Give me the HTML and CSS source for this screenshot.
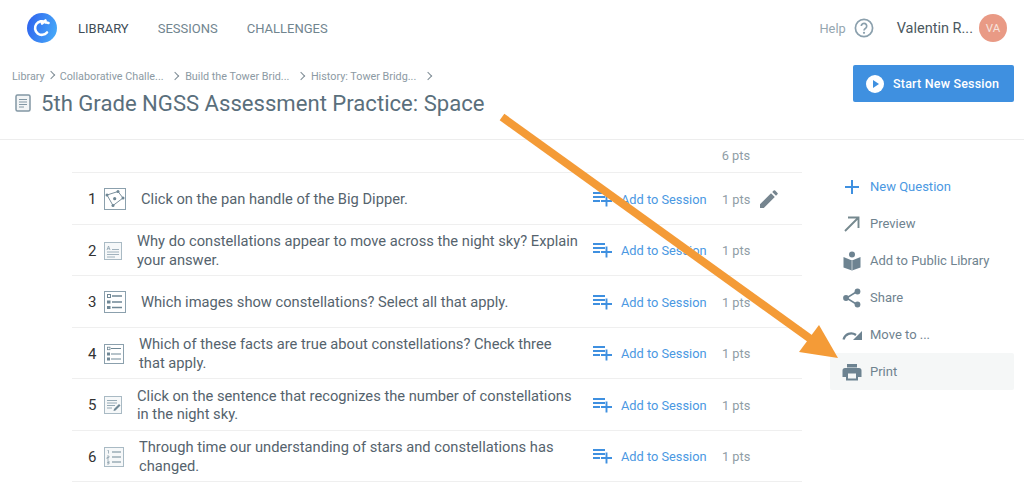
FILE: index.html
```html
<!DOCTYPE html>
<html lang="en">
<head>
<meta charset="utf-8">
<title>5th Grade NGSS Assessment Practice: Space</title>
<link rel="stylesheet" href="styles.css">
</head>
<body>
<svg width="0" height="0" class="defs">
  <defs>
    <symbol id="add" viewBox="0 0 20 15">
      <path d="M1 1h12M1 5h12M1 9h7M14.500 3.500v11M9 9h11" fill="none" stroke="#3f90e0" stroke-width="1.900"/>
    </symbol>
  </defs>
</svg>
<header class="topbar">
  <svg class="logo" viewBox="0 0 30 30">
    <defs><linearGradient id="lg" x1="0" x2="1" y1="0.2" y2="0.5"><stop offset="0" stop-color="#2f63ee"/><stop offset="1" stop-color="#45a6f8"/></linearGradient></defs>
    <circle cx="15" cy="15" r="15" fill="url(#lg)"/>
    <path d="M20 19.500a6.800 6.800 0 1 1-1.500-10.200M15 10.500l3.500-3M18.500 9.300l3 .7" fill="none" stroke="#fff" stroke-width="2.600" stroke-linecap="round"/>
  </svg>
  <nav class="nav">
    <a class="nav-link active">LIBRARY</a>
    <a class="nav-link">SESSIONS</a>
    <a class="nav-link">CHALLENGES</a>
  </nav>
  <div class="account">
    <span class="help">Help</span>
    <svg class="help-icon" viewBox="0 0 20 20"><circle cx="10" cy="10" r="8.600" fill="none" stroke="#8ba0ad" stroke-width="1.700"/><path d="M7.300 8a2.700 2.700 0 1 1 4.300 2.200c-1 .7-1.600 1.200-1.600 2.300" fill="none" stroke="#8ba0ad" stroke-width="1.700"/><circle cx="10" cy="14.800" r="1.100" fill="#8ba0ad"/></svg>
    <span class="user">Valentin R...</span>
    <span class="avatar">VA</span>
  </div>
</header>
<section class="heading">
  <div class="heading-text">
    <div class="crumbs">
      <span class="crumb first">Library</span>
      <span class="crumb">Collaborative Challe...</span>
      <span class="crumb">Build the Tower Brid...</span>
      <span class="crumb">History: Tower Bridg...</span>
    </div>
    <h1 class="title">
      <svg class="doc" viewBox="0 0 16 18"><rect x="1" y="1" width="14" height="16" rx="1.500" fill="#f3f5f6" stroke="#8297a4" stroke-width="1.500"/><path d="M4 5.500h8M4 8h8M4 10.500h8M4 13h5" stroke="#8297a4" stroke-width="1"/></svg>
      5th Grade NGSS Assessment Practice: Space
    </h1>
  </div>
  <button class="start">
    <svg class="play" viewBox="0 0 18 18"><circle cx="9" cy="9" r="9" fill="#fff"/><path d="M7 5l6 4-6 4z" fill="#3f90e0"/></svg>
    Start New Session
  </button>
</section>
<main class="content">
  <div class="questions">
    <div class="total"><span>6 pts</span></div>
    <div class="q">
      <span class="num">1</span>
      <svg class="qi w22" viewBox="0 0 22 22"><rect x=".5" y=".5" width="21" height="21" fill="#fff" stroke="#8ba0ad"/><path d="M3 7l11-3.500 5 6.500-10 7.500z" fill="none" stroke="#7b909d" stroke-width="1"/><circle cx="3" cy="7" r="1.500" fill="#6f8795"/><circle cx="14" cy="3.500" r="1.500" fill="#6f8795"/><circle cx="19" cy="10" r="1.500" fill="#6f8795"/><circle cx="9" cy="17.500" r="1.500" fill="#6f8795"/><circle cx="10.700" cy="10.700" r="1.600" fill="#6f8795"/></svg>
      <span class="qtext">Click on the pan handle of the Big Dipper.</span>
      <a class="add"><svg class="add-icon"><use href="#add"/></svg>Add to Session</a>
      <span class="pts">1 pts</span>
      <svg class="edit" viewBox="0 0 18 18"><path d="M0 18v-3.800L11 3.200 14.800 7 3.800 18zM12.200 2l1.500-1.500a1 1 0 0 1 1.400 0l2.400 2.400a1 1 0 0 1 0 1.400L16 5.800z" fill="#76858f"/></svg>
    </div>
    <div class="q">
      <span class="num">2</span>
      <svg class="qi w18" viewBox="0 0 18 18"><rect x=".5" y=".5" width="17" height="17" fill="#f6f8f9" stroke="#a9bac4"/><path d="M3 8l1.500-4L6 8M3.600 6.700h1.800M8 7.500h7M3 10h12M3 12.500h12M3 15h8" fill="none" stroke="#8ba0ad" stroke-width=".8"/></svg>
      <span class="qtext">Why do constellations appear to move across the night sky? Explain your answer.</span>
      <a class="add"><svg class="add-icon"><use href="#add"/></svg>Add to Session</a>
      <span class="pts">1 pts</span>
    </div>
    <div class="q">
      <span class="num">3</span>
      <svg class="qi w22" viewBox="0 0 22 22"><rect x=".5" y=".5" width="21" height="21" fill="#fff" stroke="#8ba0ad"/><path d="M8 5h10M8 11h10M8 16.500h10" stroke="#6f8795" stroke-width="1.300"/><rect x="3.500" y="3.500" width="3" height="3" fill="none" stroke="#6f8795"/><rect x="3" y="9.500" width="3.500" height="3" fill="#6f8795"/><rect x="3" y="15" width="3.500" height="3" fill="#6f8795"/></svg>
      <span class="qtext">Which images show constellations? Select all that apply.</span>
      <a class="add"><svg class="add-icon"><use href="#add"/></svg>Add to Session</a>
      <span class="pts">1 pts</span>
    </div>
    <div class="q">
      <span class="num">4</span>
      <svg class="qi w20" viewBox="0 0 20 20"><rect x=".5" y=".5" width="19" height="19" fill="#fff" stroke="#8ba0ad"/><path d="M7 4.500h10M7 10h10M7 15h10" stroke="#6f8795" stroke-width="1.200"/><rect x="3.500" y="3.200" width="2.500" height="2.500" fill="none" stroke="#6f8795" stroke-width=".8"/><rect x="3" y="8.500" width="3" height="3" fill="#6f8795"/><rect x="3" y="13.500" width="3" height="3" fill="#6f8795"/></svg>
      <span class="qtext">Which of these facts are true about constellations? Check three that apply.</span>
      <a class="add"><svg class="add-icon"><use href="#add"/></svg>Add to Session</a>
      <span class="pts">1 pts</span>
    </div>
    <div class="q">
      <span class="num">5</span>
      <svg class="qi w18" viewBox="0 0 18 18"><rect x=".5" y=".5" width="17" height="17" fill="#f6f8f9" stroke="#a9bac4"/><path d="M3 4.500h10M3 7h10M3 9.500h8M3 12h5" stroke="#8ba0ad" stroke-width=".9"/><path d="M9.500 15l.5-2 5-5 1.500 1.500-5 5z" fill="#6f8795"/></svg>
      <span class="qtext">Click on the sentence that recognizes the number of constellations in the night sky.</span>
      <a class="add"><svg class="add-icon"><use href="#add"/></svg>Add to Session</a>
      <span class="pts">1 pts</span>
    </div>
    <div class="q">
      <span class="num">6</span>
      <svg class="qi w20" viewBox="0 0 20 20"><rect x=".5" y=".5" width="19" height="19" fill="#f6f8f9" stroke="#a9bac4"/><path d="M8 5h9M8 10h9M8 15h9" stroke="#6f8795" stroke-width="1.100"/><path d="M3.500 3.500h1v3M3 9h2v1.500H3V12h2M3 14h2v3H3M3 15.500h2" fill="none" stroke="#6f8795" stroke-width=".6"/></svg>
      <span class="qtext">Through time our understanding of stars and constellations has changed.</span>
      <a class="add"><svg class="add-icon"><use href="#add"/></svg>Add to Session</a>
      <span class="pts">1 pts</span>
    </div>
  </div>
  <aside class="side">
    <a class="action primary">
      <svg class="action-icon" viewBox="0 0 20 20"><path d="M10 3v14M3 10h14" stroke="#3f90e0" stroke-width="2"/></svg>New Question
    </a>
    <a class="action">
      <svg class="action-icon" viewBox="0 0 20 20"><path d="M3 17L16.500 3.500M6 3.500h10.500V14" fill="none" stroke="#76898f" stroke-width="1.900"/></svg>Preview
    </a>
    <a class="action">
      <svg class="action-icon" viewBox="0 0 20 20"><circle cx="10" cy="3.500" r="3" fill="#6d8391"/><path d="M1.500 6l8.500 3.500L18.500 6v10.500L10 19.500 1.500 16.500z" fill="#6d8391"/><path d="M10 10v9" stroke="#fff" stroke-width=".6"/></svg>Add to Public Library
    </a>
    <a class="action">
      <svg class="action-icon" viewBox="0 0 20 20"><path d="M15 3.500L4.500 10 15 16.500" fill="none" stroke="#6d8391" stroke-width="1.500"/><circle cx="15.500" cy="3.500" r="2.900" fill="#6d8391"/><circle cx="4" cy="10" r="2.900" fill="#6d8391"/><circle cx="15.500" cy="16.500" r="2.900" fill="#6d8391"/></svg>Share
    </a>
    <a class="action">
      <svg class="action-icon" viewBox="0 0 20 20"><path d="M1.500 14.500C3 9 9 6.500 14 10" fill="none" stroke="#6d8391" stroke-width="2.200"/><path d="M20 6v9h-9z" fill="#6d8391"/></svg>Move to ...
    </a>
    <a class="action hover">
      <svg class="action-icon" viewBox="0 0 20 20"><path d="M5 2h10v3.500H5zM3 6h14a2.500 2.500 0 0 1 2.500 2.500V15H16v3.500H4V15H.5V8.500A2.500 2.500 0 0 1 3 6z" fill="#6d8391"/><rect x="6" y="11.500" width="8" height="5" fill="#f5f7f7"/></svg>Print
    </a>
  </aside>
</main>
<svg class="arrow" viewBox="0 0 1024 492" width="1024" height="492">
  <path d="M502 117L812 340" stroke="#f49b37" stroke-width="8" fill="none"/>
  <path d="M838 358L819 325L799 352z" fill="#f49b37"/>
</svg>
</body>
</html>
```
FILE: styles.css
```css
* { box-sizing: border-box; }
html, body { margin: 0; padding: 0; }
body {
  position: relative;
  width: 1024px;
  height: 492px;
  overflow: hidden;
  background: #fff;
  font-family: Roboto, "Liberation Sans", sans-serif;
  color: #55646e;
}
.defs { position: absolute; }

.topbar {
  display: flex;
  align-items: center;
  height: 56px;
  padding: 0 17px 0 27px;
}
.logo { width: 30px; height: 30px; }
.nav { display: flex; gap: 29px; margin-left: 21px; }
.nav-link { font-size: 13px; color: #71858f; }
.nav-link.active { color: #3f4d57; }
.account { display: flex; align-items: center; margin-left: auto; }
.help { font-size: 12.800px; color: #95a6b0; }
.help-icon { width: 20px; height: 20px; margin-left: 8px; }
.user { font-size: 14.500px; color: #4b5860; margin-left: 23px; }
.avatar {
  display: flex; align-items: center; justify-content: center;
  width: 28px; height: 28px; margin-left: 6px;
  border-radius: 50%;
  background: #e99a85;
  color: #f7e3dc;
  font-size: 11.500px;
}

.heading {
  display: flex;
  justify-content: space-between;
  height: 84px;
  padding: 9px 10px 0 12px;
  border-bottom: 1px solid #ededed;
}
.crumbs { display: flex; height: 22px; align-items: center; font-size: 10.800px; color: #8c9aa3; }
.crumb { position: relative; padding-right: 21.500px; }
.crumb::after {
  content: "";
  position: absolute;
  right: 7px; top: 50%;
  width: 5px; height: 5px;
  margin-top: -3px;
  border-top: 1px solid #7f8d96;
  border-right: 1px solid #7f8d96;
  transform: rotate(45deg);
}
.crumb.first { padding-right: 15px; }
.crumb.first::after { right: 6px; margin-top: -4px; }
.title {
  display: flex;
  align-items: center;
  gap: 10px;
  margin: 3px 0 0;
  font-size: 22.100px;
  font-weight: 400;
  color: #5a6f7c;
  white-space: nowrap;
}
.doc { width: 16px; height: 18px; margin-left: 3px; }
.start {
  display: flex;
  align-items: center;
  gap: 9px;
  width: 161px;
  height: 37px;
  padding: 0 0 0 13px;
  border: 0;
  border-radius: 2px;
  background: #3f90e0;
  color: #fff;
  font: 500 12.500px Roboto, sans-serif;
  letter-spacing: .2px;
  white-space: nowrap;
}
.play { width: 18px; height: 18px; }

.content { display: flex; padding-left: 72px; }
.questions { width: 730px; }
.total {
  display: flex;
  justify-content: flex-end;
  align-items: center;
  height: 33px;
  padding: 0 52px 2px 0;
  border-bottom: 1px solid #efefef;
  font-size: 12.800px;
  color: #8f9da6;
}
.q {
  display: flex;
  align-items: center;
  height: 51.500px;
  padding: 2px 42px 0 16px;
  border-bottom: 1px solid #efefef;
}
.num { width: 16px; font-size: 15px; color: #333; }
.qi { flex: none; margin-right: 15px; }
.w22 { width: 22px; height: 22px; }
.w20 { width: 20px; height: 20px; }
.w18 { width: 18px; height: 18px; }
.qtext {
  flex: 1;
  font-size: 14.700px;
  line-height: 18.500px;
  color: #55636d;
  padding-right: 12.500px;
}
.add {
  display: flex;
  align-items: center;
  flex: none;
  width: 130px;
  font-size: 12.800px;
  color: #4a98e2;
}
.add-icon { width: 20px; height: 15px; margin: 0 9px 0 0; }
.pts { flex: none; width: 38px; font-size: 12.800px; color: #8f9da6; }
.edit { flex: none; width: 18px; height: 18px; margin-right: -18px; }

.side { display: flex; flex-direction: column; width: 184px; margin-left: 28px; padding-top: 28px; }
.action {
  display: flex;
  align-items: center;
  height: 37px;
  padding-left: 12px;
  border-radius: 2px;
  font-size: 13px;
  color: #6f838f;
}
.action.primary { color: #4a98e2; }
.action.hover { background: #f5f7f7; }
.action-icon { width: 20px; height: 20px; margin-right: 8px; }

.arrow { position: absolute; left: 0; top: 0; pointer-events: none; }
```
